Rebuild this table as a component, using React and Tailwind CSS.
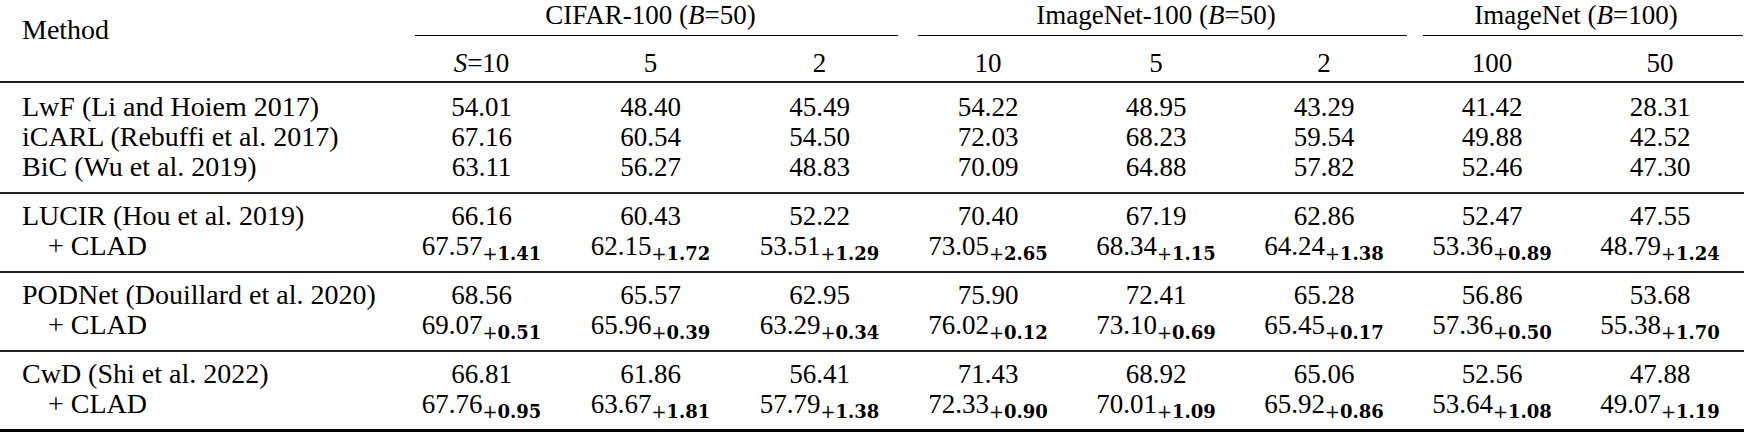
import React from 'react';

// Results table: columns share one grid template so header and body line up
const cols = 'grid grid-cols-[397px_169px_169px_169px_168px_168px_168px_168px_168px]';

const groups = [
  [
    { name: 'LwF (Li and Hoiem 2017)', vals: ['54.01', '48.40', '45.49', '54.22', '48.95', '43.29', '41.42', '28.31'] },
    { name: 'iCARL (Rebuffi et al. 2017)', vals: ['67.16', '60.54', '54.50', '72.03', '68.23', '59.54', '49.88', '42.52'] },
    { name: 'BiC (Wu et al. 2019)', vals: ['63.11', '56.27', '48.83', '70.09', '64.88', '57.82', '52.46', '47.30'] },
  ],
  [
    { name: 'LUCIR (Hou et al. 2019)', vals: ['66.16', '60.43', '52.22', '70.40', '67.19', '62.86', '52.47', '47.55'] },
    {
      name: '+ CLAD',
      sub: true,
      vals: [['67.57', '1.41'], ['62.15', '1.72'], ['53.51', '1.29'], ['73.05', '2.65'], ['68.34', '1.15'], ['64.24', '1.38'], ['53.36', '0.89'], ['48.79', '1.24']],
    },
  ],
  [
    { name: 'PODNet (Douillard et al. 2020)', vals: ['68.56', '65.57', '62.95', '75.90', '72.41', '65.28', '56.86', '53.68'] },
    {
      name: '+ CLAD',
      sub: true,
      vals: [['69.07', '0.51'], ['65.96', '0.39'], ['63.29', '0.34'], ['76.02', '0.12'], ['73.10', '0.69'], ['65.45', '0.17'], ['57.36', '0.50'], ['55.38', '1.70']],
    },
  ],
  [
    { name: 'CwD (Shi et al. 2022)', vals: ['66.81', '61.86', '56.41', '71.43', '68.92', '65.06', '52.56', '47.88'] },
    {
      name: '+ CLAD',
      sub: true,
      vals: [['67.76', '0.95'], ['63.67', '1.81'], ['57.79', '1.38'], ['72.33', '0.90'], ['70.01', '1.09'], ['65.92', '0.86'], ['53.64', '1.08'], ['49.07', '1.19']],
    },
  ],
];

const Gain = ({ v }) => (
  <span className="align-[-5px] leading-none text-[18px] font-['DejaVu_Serif',serif]">
    <span className="font-normal">+</span>
    <span className="font-bold">{v}</span>
  </span>
);

const Row = ({ row }) => (
  <div className={`${cols} h-[30px] leading-[30px]`}>
    <div className={`text-[28px] ${row.sub ? 'pl-[48px]' : 'pl-[22px]'}`}>{row.name}</div>
    {row.vals.map((v, i) => (
      <div key={i} className="text-center whitespace-nowrap">
        {row.sub ? (
          <>
            {v[0]}
            <Gain v={v[1]} />
          </>
        ) : (
          v
        )}
      </div>
    ))}
  </div>
);

const App = () => {
  const subHeads = ['10', '5', '2', '10', '5', '2', '100', '50'];

  return (
    <div className="w-[1748px] h-[436px] bg-white text-black font-['Liberation_Serif',serif] text-[27px] overflow-hidden">
      <div className="w-[1744px]">
        {/* Header */}
        <div className={`${cols} grid-rows-[30px_18px_30px]`}>
          <div className="col-start-1 row-start-1 row-span-2 pl-[22px] pt-[15px] leading-[30px] text-[28px]">Method</div>
          <div className="col-start-2 col-span-3 row-start-1 text-center leading-[30px]">
            CIFAR-100 (<i>B</i>=50)
          </div>
          <div className="col-start-5 col-span-3 row-start-1 text-center leading-[30px]">
            ImageNet-100 (<i>B</i>=50)
          </div>
          <div className="col-start-8 col-span-2 row-start-1 text-center leading-[30px]">
            ImageNet (<i>B</i>=100)
          </div>

          <div className="col-start-2 col-span-3 row-start-2 self-start mt-[5px] ml-[18px] mr-[6px] h-px bg-black" />
          <div className="col-start-5 col-span-3 row-start-2 self-start mt-[5px] ml-[14px] mr-px h-px bg-black" />
          <div className="col-start-8 col-span-2 row-start-2 self-start mt-[5px] ml-[15px] mr-px h-px bg-black" />

          {subHeads.map((s, i) => (
            <div key={i} className="row-start-3 text-center leading-[30px]" style={{ gridColumnStart: i + 2 }}>
              {i === 0 ? (
                <>
                  <i>S</i>=10
                </>
              ) : (
                s
              )}
            </div>
          ))}
        </div>
        <div className="mt-[3px] mb-[9px] h-[2px] bg-[#222]" />

        {groups.map((g, gi) => (
          <div key={gi}>
            {gi > 0 && <div className="mt-[10px] mb-[7px] h-[2px] bg-[#222]" />}
            {g.map((row, ri) => (
              <Row key={ri} row={row} />
            ))}
          </div>
        ))}
        <div className="mt-[10px] h-[3px] bg-black" />
      </div>
    </div>
  );
};

export default App;
